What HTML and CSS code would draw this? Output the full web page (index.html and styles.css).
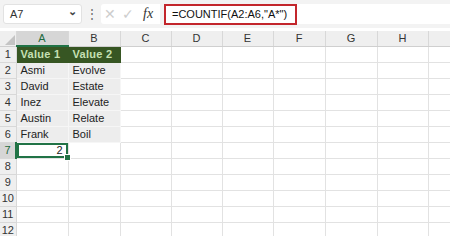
FILE: index.html
```html
<!DOCTYPE html>
<html lang="en">
<head>
    <meta charset="UTF-8">
    <title>COUNTIF</title>
    <link rel="stylesheet" href="styles.css">
</head>
<body>
    <div class="topbar">
        <div class="namebox"><span>A7</span><span class="chev">&#8964;</span></div>
        <div class="dots">&#8942;</div>
        <div class="fxbox">
            <span class="mark">&#10005;</span>
            <span class="mark">&#10003;</span>
            <span class="fx">fx</span>
        </div>
        <div class="formula">
            <div class="hl">=COUNTIF(A2:A6,"A*")</div>
        </div>
    </div>

    <table class="sheet">
        <colgroup>
            <col class="c-row">
            <col class="c-52"><col class="c-52"><col class="c-51"><col class="c-51">
            <col class="c-51"><col class="c-52"><col class="c-52"><col class="c-51"><col class="c-end">
        </colgroup>
        <tr class="head">
            <th class="corner"><div class="tri"></div></th>
            <th class="sel">A</th><th>B</th><th>C</th><th>D</th><th>E</th><th>F</th><th>G</th><th>H</th><th></th>
        </tr>
        <tr><th>1</th><td class="title">Value 1</td><td class="title">Value 2</td><td></td><td></td><td></td><td></td><td></td><td></td><td></td></tr>
        <tr><th>2</th><td class="fill">Asmi</td><td class="fill">Evolve</td><td></td><td></td><td></td><td></td><td></td><td></td><td></td></tr>
        <tr><th>3</th><td class="fill">David</td><td class="fill">Estate</td><td></td><td></td><td></td><td></td><td></td><td></td><td></td></tr>
        <tr><th>4</th><td class="fill">Inez</td><td class="fill">Elevate</td><td></td><td></td><td></td><td></td><td></td><td></td><td></td></tr>
        <tr><th>5</th><td class="fill">Austin</td><td class="fill">Relate</td><td></td><td></td><td></td><td></td><td></td><td></td><td></td></tr>
        <tr><th>6</th><td class="fill">Frank</td><td class="fill">Boil</td><td></td><td></td><td></td><td></td><td></td><td></td><td></td></tr>
        <tr><th class="sel">7</th><td class="active">2<div class="handle"></div></td><td></td><td></td><td></td><td></td><td></td><td></td><td></td><td></td></tr>
        <tr><th>8</th><td></td><td></td><td></td><td></td><td></td><td></td><td></td><td></td><td></td></tr>
        <tr><th>9</th><td></td><td></td><td></td><td></td><td></td><td></td><td></td><td></td><td></td></tr>
        <tr><th>10</th><td></td><td></td><td></td><td></td><td></td><td></td><td></td><td></td><td></td></tr>
        <tr><th>11</th><td></td><td></td><td></td><td></td><td></td><td></td><td></td><td></td><td></td></tr>
        <tr><th>12</th><td></td><td></td><td></td><td></td><td></td><td></td><td></td><td></td><td></td></tr>
    </table>
</body>
</html>
```

FILE: styles.css
```css
body{
    margin: 0;
    width: 450px;
    height: 236px;
    overflow: hidden;
    background: #ffffff;
    font-family: "Liberation Sans", Arial, sans-serif;
    font-size: 11px;
    color: #222;
}
.topbar{
    height: 28px;
    background: #f3f3f3;
    display: flex;
    align-items: center;
    padding-left: 3px;
}
.namebox{
    box-sizing: border-box;
    width: 79px;
    height: 20px;
    background: #fff;
    border: 1px solid #e2e2e2;
    border-radius: 3px;
    display: flex;
    align-items: center;
    justify-content: space-between;
    padding: 0 4px 0 6px;
    color: #333;
}
.chev{
    font-size: 11px;
    color: #444;
    margin-top: -6px;
    font-weight: bold;
}
.dots{
    width: 19px;
    text-align: center;
    color: #666;
    font-size: 12px;
}
.fxbox{
    box-sizing: border-box;
    width: 59px;
    height: 20px;
    background: #fff;
    border-radius: 3px 0 0 3px;
    display: flex;
    align-items: center;
    padding-left: 3px;
    gap: 6px;
}
.mark{
    color: #cdcdcd;
    font-size: 14px;
}
.fx{
    font-family: "Liberation Serif", serif;
    font-style: italic;
    font-size: 14px;
    color: #333;
    margin-left: 3px;
}
.formula{
    flex: 1;
    height: 20px;
    margin-left: 4px;
    background: #fff;
}
.hl{
    box-sizing: border-box;
    width: 133px;
    height: 21px;
    border: 2px solid #c3262c;
    padding-left: 6px;
    line-height: 17px;
    color: #111;
}
.sheet{
    margin-top: 3px;
    border-collapse: collapse;
    table-layout: fixed;
    width: 450px;
}
.c-row{ width: 16px; }
.c-52{ width: 52px; }
.c-51{ width: 51px; }
.c-end{ width: 22px; }
.sheet tr{
    height: 16px;
}
.sheet tr.head{
    height: 15px;
}
.sheet th{
    background: #efefef;
    font-weight: normal;
    color: #333;
    padding: 0;
    border-right: 1px solid #d8d8d8;
    border-bottom: 1px solid #d8d8d8;
    text-align: center;
    font-size: 11px;
}
.sheet tr.head th{
    border-bottom: 1px solid #cfcfcf;
}
.sheet th.sel{
    background: #d6d6d6;
    color: #1e6b3f;
}
.sheet tr.head th.sel{
    border-bottom: 2px solid #217346;
}
.sheet tr th.sel:first-child{
    border-right: 2px solid #217346;
}
.corner{
    position: relative;
}
.tri{
    position: absolute;
    right: 1px;
    bottom: 1px;
    width: 0;
    height: 0;
    border-left: 10px solid transparent;
    border-bottom: 10px solid #c4c4c4;
}
.sheet td{
    padding: 0 4px;
    border-right: 1px solid #e2e2e2;
    border-bottom: 1px solid #e2e2e2;
    white-space: nowrap;
    overflow: hidden;
    color: #222;
}
.sheet td.title{
    background: #375623;
    color: #c6e0b4;
    font-weight: bold;
    letter-spacing: 0.3px;
    border-color: #375623;
}
.sheet td.fill{
    background: #ededed;
    border-right-color: #f6f6f6;
    border-bottom-color: #f6f6f6;
}
.sheet td.active{
    position: relative;
    overflow: visible;
    text-align: right;
    box-shadow: inset 0 0 0 2px #217346;
    padding-right: 5px;
}
.handle{
    position: absolute;
    right: -3px;
    bottom: -3px;
    width: 5px;
    height: 5px;
    background: #217346;
    border: 1px solid #fff;
}
```
